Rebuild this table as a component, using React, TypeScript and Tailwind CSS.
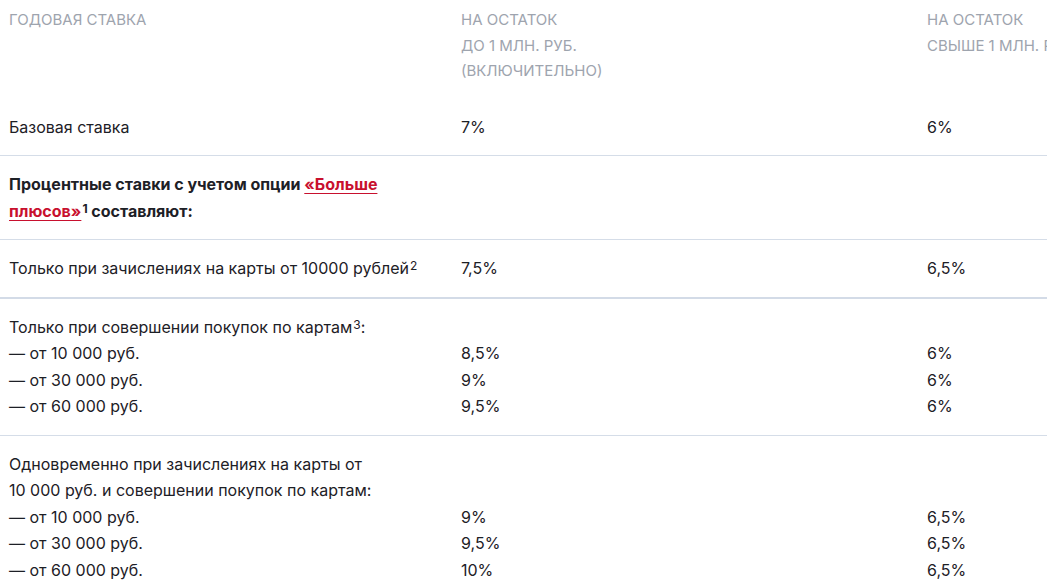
import React from "react"

type Row = {
  label: React.ReactNode[]
  low: string[]
  high: string[]
  thick?: boolean
  noBorder?: boolean
}

const Sup = ({ n }: { n: string }) => <sup className="text-[12px] relative -top-[4px] ml-[1px]">{n}</sup>

const rows: Row[] = [
  { label: ["Базовая ставка"], low: ["7%"], high: ["6%"] },
  {
    label: [
      <span className="font-bold">
        Процентные ставки с учетом опции{" "}
        <a href="#" className="text-[#c8102e] underline underline-offset-[3px] decoration-1">
          «Больше
        </a>
      </span>,
      <span className="font-bold">
        <a href="#" className="text-[#c8102e] underline underline-offset-[3px] decoration-1">
          плюсов»
        </a>
        <Sup n="1" /> составляют:
      </span>,
    ],
    low: [],
    high: [],
  },
  {
    label: [
      <span>
        Только при зачислениях на карты от 10000 рублей
        <Sup n="2" />
      </span>,
    ],
    low: ["7,5%"],
    high: ["6,5%"],
    thick: true,
  },
  {
    label: [
      <span>
        Только при совершении покупок по картам
        <Sup n="3" />:
      </span>,
      "— от 10 000 руб.",
      "— от 30 000 руб.",
      "— от 60 000 руб.",
    ],
    low: ["", "8,5%", "9%", "9,5%"],
    high: ["", "6%", "6%", "6%"],
  },
  {
    label: [
      "Одновременно при зачислениях на карты от",
      "10 000 руб. и совершении покупок по картам:",
      "— от 10 000 руб.",
      "— от 30 000 руб.",
      "— от 60 000 руб.",
    ],
    low: ["", "", "9%", "9,5%", "10%"],
    high: ["", "", "6,5%", "6,5%", "6,5%"],
    noBorder: true,
  },
]

const Lines = ({ items }: { items: React.ReactNode[] }) => (
  <div className="flex flex-col">
    {items.map((t, i) => (
      <div key={i} className="h-[26.5px] leading-[26.5px] whitespace-nowrap">
        {t === "" ? "\u00a0" : t}
      </div>
    ))}
  </div>
)

export default function App() {
  return (
    <div className="w-[1047px] h-[582px] overflow-hidden bg-white text-[16px] text-[#1d2026] font-['Inter','Liberation_Sans',sans-serif]">
      <div className="w-[1130px]">
        {/* Header */}
        <div className="grid grid-cols-[452px_466px_1fr] pt-[7px] pb-[15px] text-[15px] leading-[25.5px] text-[#9ea4ae] uppercase">
          <div className="pl-[9px]">Годовая ставка</div>
          <div className="pl-[9px]">
            <div>На остаток</div>
            <div>до 1 млн. руб.</div>
            <div>(включительно)</div>
          </div>
          <div className="pl-[9px]">
            <div>На остаток</div>
            <div className="whitespace-nowrap">свыше 1 млн. руб.</div>
          </div>
        </div>

        {rows.map((r, i) => (
          <div
            key={i}
            className={`grid grid-cols-[452px_466px_1fr] pt-[15px] pb-[15px] ${
              r.noBorder ? "" : r.thick ? "border-b-2 border-[#d3dbe7]" : "border-b border-[#d5dde8]"
            }`}
          >
            <div className="pl-[9px]">
              <Lines items={r.label} />
            </div>
            <div className="pl-[9px]">
              <Lines items={r.low} />
            </div>
            <div className="pl-[9px]">
              <Lines items={r.high} />
            </div>
          </div>
        ))}
      </div>
    </div>
  )
}
